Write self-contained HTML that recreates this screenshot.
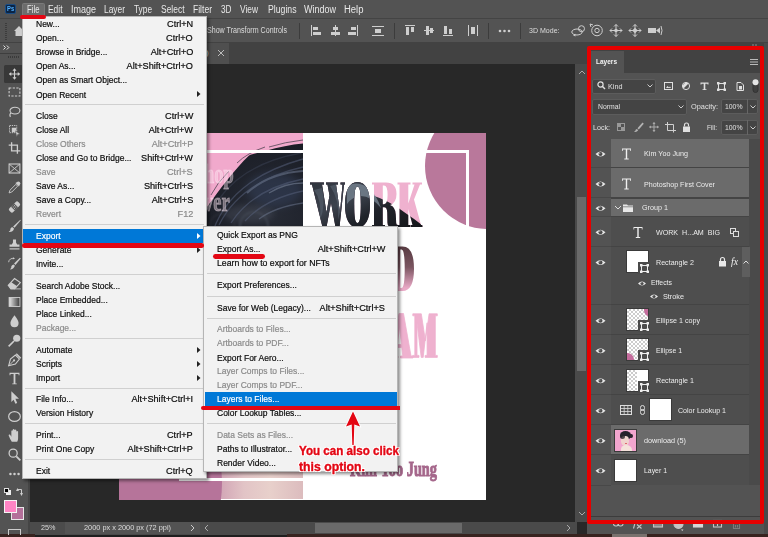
<!DOCTYPE html>
<html><head><meta charset="utf-8"><title>Photoshop export layers</title>
<style>
*{box-sizing:border-box;margin:0;padding:0}
html,body{width:768px;height:537px;overflow:hidden;background:#282828}
body{position:relative;font-family:"Liberation Sans",sans-serif;color:#ddd;font-size:9px}
.a{position:absolute}
.t{position:absolute;white-space:nowrap;transform-origin:0 50%;line-height:1}
.tr{position:absolute;white-space:nowrap;transform-origin:100% 50%;line-height:1;text-align:right}
.mi{color:#111}
.dis{color:#8c8c8c}
.sep{position:absolute;height:1px;background:#d0d0d0}
svg{position:absolute;overflow:visible}
</style></head><body>

<div class="a" style="left:0;top:0;width:768px;height:18px;background:#535353"></div>
<div class="a" style="left:0;top:17.500px;width:768px;height:24.500px;background:#535353;border-top:1.200px solid #444"></div>
<div class="a" style="left:0;top:42px;width:768px;height:22px;background:#424242"></div>
<div class="a" style="left:0;top:42.500px;width:229px;height:21.500px;background:#4f4f4f"></div>
<div class="a" style="left:30px;top:64px;width:545px;height:458px;background:#282828"></div>
<div class="a" style="left:0;top:43px;width:28px;height:494px;background:#535353"></div>
<div class="a" style="left:28px;top:64px;width:2px;height:470px;background:#454545"></div>
<div class="a" style="left:30px;top:522px;width:547px;height:12px;background:#4a4a4a"></div>
<div class="a" style="left:30px;top:522px;width:170px;height:12px;background:#535353"></div>
<div class="a" style="left:30px;top:522px;width:35px;height:12px;background:#4b4b4b"></div>
<div class="a" style="left:314.500px;top:522.500px;width:147.500px;height:10.500px;background:#6a6a6a"></div>
<div class="a" style="left:575px;top:64px;width:12px;height:458px;background:#4a4a4a"></div>
<div class="a" style="left:577px;top:197px;width:8.500px;height:174px;background:#6a6a6a"></div>
<div class="a" style="left:587px;top:43px;width:181px;height:494px;background:#424242"></div>
<div class="a" style="left:764px;top:43px;width:4px;height:494px;background:#4a4a4a"></div>
<div class="a" style="left:0;top:533.500px;width:768px;height:3.500px;background:#38231f"></div>
<div class="a" style="left:35px;top:533.500px;width:252px;height:3.500px;background:#1e1e1e;border-top:1px solid #4a4a4a"></div>
<div class="a" style="left:5px;top:4px;width:11px;height:10px;background:#0a2445;border-radius:2px;border:1px solid #1c4d84"></div>
<div class="t" style="left:6.500px;top:5.500px;font-size:6.500px;font-weight:bold;color:#4fb0ff;transform:scaleX(.9)">Ps</div>
<div class="a" style="left:22px;top:2.500px;width:22.500px;height:14px;background:#6c6c6c;border:1px solid #7a7a7a;border-radius:1.500px"></div>
<div class="t mb" style="left: 26.5px; top: 4.5px; font-size: 10px; color: rgb(232, 232, 232); transform: scaleX(0.7752);">File</div>
<div class="t mb" style="left: 47.5px; top: 4.5px; font-size: 10px; color: rgb(232, 232, 232); transform: scaleX(0.8413);">Edit</div>
<div class="t mb" style="left: 71px; top: 4.5px; font-size: 10px; color: rgb(232, 232, 232); transform: scaleX(0.8994);">Image</div>
<div class="t mb" style="left: 104px; top: 4.5px; font-size: 10px; color: rgb(232, 232, 232); transform: scaleX(0.8395);">Layer</div>
<div class="t mb" style="left: 134px; top: 4.5px; font-size: 10px; color: rgb(232, 232, 232); transform: scaleX(0.83);">Type</div>
<div class="t mb" style="left: 160.5px; top: 4.5px; font-size: 10px; color: rgb(232, 232, 232); transform: scaleX(0.8454);">Select</div>
<div class="t mb" style="left: 193px; top: 4.5px; font-size: 10px; color: rgb(232, 232, 232); transform: scaleX(0.8545);">Filter</div>
<div class="t mb" style="left: 220.5px; top: 4.5px; font-size: 10px; color: rgb(232, 232, 232); transform: scaleX(0.8205);">3D</div>
<div class="t mb" style="left: 240px; top: 4.5px; font-size: 10px; color: rgb(232, 232, 232); transform: scaleX(0.8372);">View</div>
<div class="t mb" style="left: 267.5px; top: 4.5px; font-size: 10px; color: rgb(232, 232, 232); transform: scaleX(0.8686);">Plugins</div>
<div class="t mb" style="left: 304px; top: 4.5px; font-size: 10px; color: rgb(232, 232, 232); transform: scaleX(0.8994);">Window</div>
<div class="t mb" style="left: 343.5px; top: 4.5px; font-size: 10px; color: rgb(232, 232, 232); transform: scaleX(0.9476);">Help</div>
<div class="t fit" style="left: 207px; top: 26px; font-size: 8.5px; color: rgb(220, 220, 220); transform: scaleX(0.8341);">Show Transform Controls</div>
<div class="a" style="left:299px;top:23px;width:1px;height:16px;background:#3c3c3c"></div>
<div class="a" style="left:394px;top:23px;width:1px;height:16px;background:#3c3c3c"></div>
<div class="a" style="left:488px;top:23px;width:1px;height:16px;background:#3c3c3c"></div>
<div class="a" style="left:520px;top:23px;width:1px;height:16px;background:#3c3c3c"></div>
<svg style="left:0;top:0" width="768" height="64">
<g fill="#cecece">
<rect x="311" y="25" width="1" height="11"></rect><rect x="313" y="27" width="5" height="3"></rect><rect x="313" y="32" width="8" height="3"></rect>
<rect x="335" y="25" width="1" height="11"></rect><rect x="333" y="27" width="5" height="3"></rect><rect x="331" y="32" width="9" height="3"></rect>
<rect x="357" y="25" width="1" height="11"></rect><rect x="351" y="27" width="5" height="3"></rect><rect x="348" y="32" width="8" height="3"></rect>
<rect x="372" y="26" width="12" height="1"></rect><rect x="372" y="35" width="12" height="1"></rect><rect x="375" y="29" width="6" height="4"></rect>
<rect x="405" y="25" width="10" height="1"></rect><rect x="406" y="27" width="3" height="8"></rect><rect x="411" y="27" width="3" height="5"></rect>
<rect x="424" y="30" width="10" height="1"></rect><rect x="426" y="26" width="3" height="9"></rect><rect x="430" y="28" width="3" height="5"></rect>
<rect x="443" y="35" width="10" height="1"></rect><rect x="444" y="26" width="3" height="8"></rect><rect x="449" y="29" width="3" height="5"></rect>
<rect x="468" y="25" width="1" height="11"></rect><rect x="477" y="25" width="1" height="11"></rect><rect x="471" y="27" width="4" height="7"></rect>
<circle cx="500" cy="31" r="1.3"></circle><circle cx="504.5" cy="31" r="1.3"></circle><circle cx="509" cy="31" r="1.3"></circle>
</g>
<g fill="none" stroke="#cecece" stroke-width="1">
<ellipse cx="577" cy="32" rx="5.200" ry="3"></ellipse><circle cx="581.500" cy="28.700" r="3"></circle><path d="M575.500 36.500l-2.500 -1.200l2.300 -1.600z" fill="#cecece" stroke="none"></path>
<circle cx="597" cy="30.5" r="5.3"></circle><circle cx="597" cy="30.5" r="2.2"></circle><path d="M591 27 l-1 -3 l3 1"></path>
<path d="M616 24.5 v12 M610 30.5 h12 M614 26.5 l2 -2 l2 2 M614 34.500 l2 2 l2 -2 M612 28.500 l-2 2 l2 2 M620 28.500 l2 2 l-2 2"></path>
<path d="M635 24.500 v12 M629 30.500 h12 M633 26.500 l2 -2 l2 2 M633 34.500 l2 2 l2 -2 M631 28.500 l-2 2 l2 2 M639 28.500 l2 2 l-2 2"></path>
</g>
<rect x="648" y="28" width="8" height="5" fill="#cecece"></rect><path d="M656 30.500 l4 -3 v6 z" fill="#cecece"></path><path d="M661 26 q2 4.500 0 9" fill="none" stroke="#cecece" stroke-width="1"></path>
<circle cx="616" cy="30.500" r="1.8" fill="#cecece"></circle>
<rect x="633" y="28.500" width="4" height="4" fill="#cecece" transform="rotate(45 635 30.500)"></rect>
</svg>
<div class="t fit" style="left: 528.5px; top: 26.5px; font-size: 8px; color: rgb(220, 220, 220); transform: scaleX(0.8793);">3D Mode:</div>
<svg style="left:13.500px;top:25.500px" width="10" height="10"><path d="M0 5 L5 0 L10 5 H8.500 V10 H1.500 V5Z" fill="#cecece"></path></svg>
<div class="a" style="left:5px;top:23px;width:2px;height:17px;background:repeating-linear-gradient(180deg,#3c3c3c 0 1px,transparent 1px 2px)"></div>
<div class="t" style="left:206px;top:49px;font-size:8px;color:#ddd">) </div>
<svg style="left:218px;top:50px" width="6" height="6"><path d="M0 0L6 6M6 0L0 6" stroke="#bbb" stroke-width="1"></path></svg>
<svg style="left:3px;top:44.500px" width="7" height="5"><path d="M.5 .5L2.500 2.500L.5 4.500M3.800 .5L5.800 2.500L3.800 4.500" fill="none" stroke="#e4e4e4" stroke-width="1"></path></svg>
<div class="a" style="left:0;top:53px;width:28px;height:1px;background:#3e3e3e"></div>
<div class="a" style="left:8px;top:56px;width:12px;height:2px;background:repeating-linear-gradient(90deg,#3a3a3a 0 1px,transparent 1px 2px)"></div>
<div class="a" style="left:3.500px;top:65px;width:19px;height:17.500px;background:#383838;border-radius:1.500px"></div>
<svg style="left:0;top:0" width="30" height="537"><g transform="translate(14.500 74) scale(0.81)"><path d="M0 -6V6M-6 0H6" stroke="#cecece" stroke-width="1.4" fill="none"></path><path d="M-2.500 -4L0 -7L2.500 -4ZM-2.500 4L0 7L2.500 4ZM-4 -2.500L-7 0L-4 2.500ZM4 -2.500L7 0L4 2.500Z" fill="#cecece"></path></g><g transform="translate(14.500 92) scale(0.9)"><rect x="-6" y="-4.500" width="12" height="9" fill="none" stroke="#cecece" stroke-width="1.200" stroke-dasharray="2.500 1.500"></rect></g><g transform="translate(14.500 111.5) scale(0.9)"><ellipse cx="0.500" cy="-1" rx="5.500" ry="3.800" fill="none" stroke="#cecece" stroke-width="1.200"></ellipse><path d="M-4 1.500 q-2 2 -0.500 4.500" fill="none" stroke="#cecece" stroke-width="1.200"></path></g><g transform="translate(14.500 130) scale(0.9)"><rect x="-5.500" y="-5" width="8" height="8" fill="none" stroke="#cecece" stroke-width="1" stroke-dasharray="1.500 1"></rect><rect x="-3" y="-2.500" width="5" height="5" fill="#cecece"></rect><path d="M1 1L6 4.500L3.500 5L2.500 7.500Z" fill="#cecece" stroke="#535353" stroke-width=".5"></path></g><g transform="translate(14.500 148) scale(0.828)"><path d="M-3.500 -7V3.500H7M-7 -3.500H3.500V7" fill="none" stroke="#cecece" stroke-width="1.600"></path></g><g transform="translate(14.500 168.5) scale(0.9)"><rect x="-6" y="-5" width="12" height="10" fill="none" stroke="#cecece" stroke-width="1.200"></rect><path d="M-6 -5L6 5M6 -5L-6 5" stroke="#cecece" stroke-width="1"></path></g><g transform="translate(14.500 187.5) scale(0.9)"><path d="M-6 6L-5 3L1.500 -3.500L3.500 -1.500L-3 5Z" fill="none" stroke="#cecece" stroke-width="1"></path><path d="M1 -5L5 -1L6.500 -4.500Q6 -7 3.500 -6.500Z" fill="#cecece"></path></g><g transform="translate(14.500 207) scale(0.9)"><g transform="rotate(-45)"><rect x="-7" y="-3" width="14" height="6" rx="2" fill="#cecece"></rect><rect x="-2.500" y="-3" width="5" height="6" fill="#535353"></rect><circle cx="-1" cy="-1" r=".6" fill="#cecece"></circle><circle cx="1" cy="-1" r=".6" fill="#cecece"></circle><circle cx="-1" cy="1" r=".6" fill="#cecece"></circle><circle cx="1" cy="1" r=".6" fill="#cecece"></circle></g></g><g transform="translate(14.500 226) scale(0.9)"><path d="M6.500 -7L7 -6.500L0 2L-1.500 0.500Z" fill="#cecece"></path><path d="M-2 1.500L-0.500 3Q-2 7 -6.500 6.500Q-4 5 -4.500 3Q-4 1.500 -2 1.500Z" fill="#cecece"></path></g><g transform="translate(14.500 244.5) scale(0.765)"><path d="M-2 -6.500h4v4l1.500 2.500h3v3h-13v-3h3l1.500 -2.500z" fill="#cecece"></path><rect x="-6.500" y="5" width="13" height="1.500" fill="#cecece"></rect></g><g transform="translate(14.500 264) scale(0.9)"><path d="M6 -7L7 -6L1 1L-0.500 -0.500Z" fill="#cecece"></path><path d="M-1 0.500L0.500 2Q-1 6 -5 6Q-3 4 -3.500 2.500Q-3 1 -1 0.500Z" fill="#cecece"></path><path d="M-6.500 -2a4.500 4.500 0 0 1 6 -4" fill="none" stroke="#cecece" stroke-width="1"></path><path d="M-1.500 -7.500l2 1.500l-2.500 1z" fill="#cecece"></path></g><g transform="translate(14.500 283.5) scale(0.9)"><path d="M-7 2L0 -5.500L6.500 -1L0 6H-4Z" fill="none" stroke="#cecece" stroke-width="1.200"></path><path d="M-3.500 -1.500L3 3L0 6H-4L-7 2Z" fill="#cecece"></path><path d="M0 6H7" stroke="#cecece" stroke-width="1"></path></g><g transform="translate(14.500 302) scale(0.9)"><defs><linearGradient id="gr"><stop offset="0" stop-color="#e8e8e8"></stop><stop offset="1" stop-color="#3a3a3a"></stop></linearGradient></defs><rect x="-6" y="-5" width="12" height="10" fill="url(#gr)" stroke="#cecece" stroke-width="1"></rect></g><g transform="translate(14.500 321) scale(0.9)"><path d="M0 -6.500Q5 0 4.500 2.500A4.500 4.500 0 0 1 -4.500 2.500Q-5 0 0 -6.500Z" fill="#cecece"></path></g><g transform="translate(14.500 340.5) scale(0.9)"><circle cx="2.500" cy="-2.500" r="4" fill="#cecece"></circle><path d="M-0.500 0.500L-6.500 6.500" stroke="#cecece" stroke-width="1.800"></path></g><g transform="translate(14.500 360) scale(0.9)"><path d="M-6.500 6.500L-4.500 -1L1 -5.500L5.500 -1L1 4.500Z" fill="none" stroke="#cecece" stroke-width="1.200"></path><path d="M-6.500 6.500L-1 1" stroke="#cecece" stroke-width="1"></path><circle cx="-0.500" cy="0.500" r="1.200" fill="#cecece"></circle><path d="M2 -7L7 -2" stroke="#cecece" stroke-width="1.500"></path></g><g transform="translate(14.500 378.5) scale(0.9)"><path d="M-5.500 -6.500H5.500V-3.500H4.500V-5H1V5.500H2.500V6.500H-2.500V5.500H-1V-5H-4.500V-3.500H-5.500Z" fill="#cecece"></path></g><g transform="translate(14.500 397.5) scale(0.9)"><path d="M-3.500 -7L5 1.500H1L3 6L1 7L-1 2.500L-3.500 5Z" fill="#cecece"></path></g><g transform="translate(14.500 416.5) scale(0.9)"><ellipse cx="0" cy="0" rx="6.500" ry="5.500" fill="none" stroke="#cecece" stroke-width="1.300"></ellipse></g><g transform="translate(14.500 435.5) scale(0.9)"><path d="M-3 7Q-5 4 -6.500 0Q-6.500 -1.500 -5 -1L-3.500 1.500V-5Q-2.500 -6.500 -2 -5V-1V-6.500Q-0.800 -7.800 0 -6.500V-1V-6Q1.200 -7.200 2 -6V-0.500V-4.500Q3.200 -5.500 4 -4.500V3Q4 5.500 3 7Z" fill="#cecece"></path></g><g transform="translate(14.500 454.5) scale(0.9)"><circle cx="-1.500" cy="-1.500" r="4.500" fill="none" stroke="#cecece" stroke-width="1.400"></circle><path d="M2 2L6.500 6.500" stroke="#cecece" stroke-width="2"></path></g><g transform="translate(14.500 474) scale(0.9)"><circle cx="-4.500" cy="0" r="1.400" fill="#cecece"></circle><circle cx="0" cy="0" r="1.400" fill="#cecece"></circle><circle cx="4.500" cy="0" r="1.400" fill="#cecece"></circle></g></svg>
<div class="a" style="left:6px;top:490px;width:5px;height:5px;background:#eee"></div>
<div class="a" style="left:4px;top:488px;width:5px;height:5px;background:#000;border:1px solid #ddd"></div>
<svg style="left:16px;top:488px" width="8" height="8"><path d="M1.500 3V1.500H5.500V6" fill="none" stroke="#cecece" stroke-width="1"></path><path d="M0 3L1.500 0L3 3ZM4 5L5.500 8L7 5Z" fill="#cecece"></path></svg>
<div class="a" style="left:11px;top:507px;width:13px;height:13px;background:#b4709a;border:1px solid #e8e8e8"></div>
<div class="a" style="left:4px;top:500px;width:13px;height:13px;background:#ff84c4;border:1px solid #f4f4f4"></div>
<div class="a" style="left:8px;top:529px;width:13px;height:6px;border:1px solid #ccc;border-bottom:none"></div>
<div class="t fit" style="left: 40.5px; top: 523.5px; font-size: 8px; color: rgb(220, 220, 220); transform: scaleX(0.9054);">25%</div>
<div class="t fit" style="left: 84px; top: 523.5px; font-size: 8px; color: rgb(220, 220, 220); transform: scaleX(0.9184);">2000 px x 2000 px (72 ppi)</div>
<svg style="left:190px;top:524px" width="5" height="8"><path d="M1 1L4 4L1 7" fill="none" stroke="#ccc" stroke-width="1"></path></svg>
<svg style="left:204px;top:524px" width="5" height="8"><path d="M4 1L1 4L4 7" fill="none" stroke="#aaa" stroke-width="1"></path></svg>
<svg style="left:566px;top:524px" width="5" height="8"><path d="M1 1L4 4L1 7" fill="none" stroke="#aaa" stroke-width="1"></path></svg>
<svg style="left:578px;top:70px" width="8" height="5"><path d="M1 4L4 1L7 4" fill="none" stroke="#aaa" stroke-width="1"></path></svg>
<svg style="left:578px;top:511px" width="8" height="5"><path d="M1 1L4 4L7 1" fill="none" stroke="#aaa" stroke-width="1"></path></svg>
<div class="a" id="art" style="left:119px;top:133px;width:367px;height:367px;background:#fff;overflow:hidden">
<div class="a" style="left:0;top:0;width:184px;height:366px;background:#f1a9cc;overflow:hidden"><svg style="left:0;top:0" width="184" height="250"><defs><radialGradient id="hr" cx="150" cy="80" r="110" gradientUnits="userSpaceOnUse"><stop offset="0" stop-color="#272b35"></stop><stop offset=".55" stop-color="#1d2029"></stop><stop offset="1" stop-color="#13151a"></stop></radialGradient></defs><path d="M184,10.500 C172,11.500 160,14 146,18 C138,20 134,21 130,22.500 C116,36 101,56 88,74 C84,85 82,100 80,130 V250 H184 Z" fill="url(#hr)"></path></svg><div class="a" style="left:128px;top:40px;width:56px;height:34px;border-radius:50%;background:#34405a;opacity:.55;filter:blur(4px)"></div><div class="a" style="left:105px;top:72px;width:50px;height:18px;border-radius:50%;background:#4a4f5c;opacity:.45;filter:blur(3px)"></div><div class="a" style="left:120px;top:78px;width:30px;height:30px;border-radius:50%;border:2px solid #454b57;opacity:.7;filter:blur(.8px)"></div><div class="a" style="left:90px;top:80px;width:26px;height:26px;border-radius:50%;border:1.500px solid #40444e;opacity:.6;filter:blur(.8px)"></div><svg style="left:0;top:0;filter:blur(.5px)" width="184" height="110"><g fill="none" stroke="#56607a" stroke-width="1.300" opacity=".55"><path d="M94,98 Q112,46 184,26"></path><path d="M100,92 Q122,48 184,34"></path><path d="M112,90 Q134,56 184,46"></path><path d="M126,88 Q146,66 184,58"></path><path d="M100,66 Q126,30 182,20" stroke="#3a4152"></path><path d="M140,86 Q156,74 184,70" stroke="#6a758c"></path><path d="M150,60 Q166,50 184,50" stroke="#7c879c"></path><path d="M128,60 Q150,40 184,38" stroke="#6f7b92" stroke-width="2"></path></g><g fill="none" stroke="#2a2d36" stroke-width=".8" opacity=".8"><path d="M150,14 Q166,9 184,7"></path><path d="M118,30 Q128,20 146,14"></path><path d="M92,62 Q98,50 110,38"></path></g></svg></div>
<div class="t" style="left:85px;top:27px;font-family:'Liberation Serif',serif;font-weight:bold;font-size:28px;color:rgba(255,235,245,.4);-webkit-text-stroke:1px rgba(255,235,245,.4);transform:scaleX(.66)">hop</div>
<div class="t" style="left:85px;top:55px;font-family:'Liberation Serif',serif;font-weight:bold;font-size:28px;color:rgba(255,235,245,.4);-webkit-text-stroke:1px rgba(255,235,245,.4);transform:scaleX(.66)">ver</div>
<div class="a" style="left:0;top:326px;width:184px;height:40px;background:linear-gradient(90deg,#d3a8b7 0,#d3a8b7 56%,#e2c4c6 68%,#e8d0cb 82%,#dcbcbe 100%)"></div>
<div class="a" style="left:-60px;top:250px;width:163px;height:200px;border-radius:50%;background:#b6749a"></div>
<div class="a" style="left:306px;top:-30px;width:126px;height:126px;border-radius:50%;background:#b9789b"></div>
<div class="a" style="left:60px;top:16.800px;width:290px;height:331.500px;border:3.500px solid #fff"></div>
<svg style="left:0;top:0" width="367" height="367" viewBox="119 133 367 367"><defs><clipPath id="cw" clip-rule="evenodd"><path transform="translate(310 182.4)" d="M0,0 H14 V2 H12 L16.5,30 L19.5,13 L17.5,2 H16 V0 H28 V2 H26 L30,30 L32.5,2 H30.5 V0 H35 V2 H34 L29.5,44.5 H25.5 L21,20 L16.5,44.5 H12.5 L2,2 H0 Z"></path><path transform="translate(345 182.4)" d="M12.5,-0.5 C20.5,-0.5 25,8 25,22.25 C25,36.5 20.5,45 12.5,45 C4.5,45 0,36.5 0,22.25 C0,8 4.5,-0.5 12.5,-0.5 Z M12.5,4 C10,4 9.2,10 9.2,22.25 C9.2,34.5 10,40.5 12.5,40.5 C15,40.5 15.8,34.5 15.8,22.25 C15.8,10 15,4 12.5,4 Z" clip-rule="evenodd"></path><path transform="translate(372 182.4)" d="M0,0 H14 Q24.5,0 24.5,11.5 Q24.5,20.5 18,22.5 Q23.500,24.5 23.8,32 L24.2,40.500 Q24.3,42.500 26,42.500 V44.5 H19.500 Q15.5,44.5 15.400,40 L15.2,30 Q15.1,24.800 12,24.800 H10.800 V42.500 H13 V44.5 H0 V42.500 H2 V2 H0 Z M10.800,3 V21.800 H12 Q15.600,21.800 15.600,12.400 Q15.600,3 12,3 Z" clip-rule="evenodd"></path><path transform="translate(397.5 182.4)" d="M0,0 H13 V2 H10.800 V21 L17,2 H15 V0 H24.5 V2 H22.5 L16.5,17 L23.500,42.500 H25 V44.5 H13.500 V42.500 H15 L10.800,26.500 V42.500 H13 V44.5 H0 V42.500 H2 V2 H0 Z"></path><path transform="translate(389.500 246.600)" d="M0,0 H13 Q24.5,0 24.5,22.250 Q24.5,44.500 13,44.500 H0 V42.500 H2 V2 H0 Z M10.800,3 V41.500 H12 Q15.200,41.500 15.200,22.250 Q15.200,3 12,3 Z" clip-rule="evenodd"></path></clipPath><linearGradient id="hg" x1="0" y1="0" x2="1" y2="1"><stop offset="0" stop-color="#2b2f38"></stop><stop offset=".4" stop-color="#3c424d"></stop><stop offset=".6" stop-color="#20232a"></stop><stop offset="1" stop-color="#121316"></stop></linearGradient><linearGradient id="dg" x1="0" y1="0" x2="0" y2="1"><stop offset="0" stop-color="#4c3238"></stop><stop offset=".45" stop-color="#7a5560"></stop><stop offset=".8" stop-color="#e9a9c6"></stop></linearGradient></defs><g clip-path="url(#cw)"><rect x="300" y="175" width="135" height="60" fill="#efb1cf"></rect><rect x="300" y="175" width="71.500" height="60" fill="#23262e"></rect><path d="M300,175 H371.500 V195 Q390,201 404,212 Q416,220 427,229 V235 H300 Z" fill="url(#hg)"></path><path d="M347,186 q10,-6 22,2 q8,8 12,20 q-10,-12 -20,-12 q-8,0 -14,8 z" fill="#7b8896" opacity=".75"></path><path d="M314,190 q8,10 6,30 q6,-14 2,-32 z M330,186 q10,14 8,34 q6,-18 0,-36 z" fill="#596270" opacity=".6"></path><rect x="385" y="240" width="40" height="60" fill="url(#dg)"></rect></g><path transform="translate(390 313.500)" d="M9,0 H13.500 L21,42.500 H23 V44.500 H10.500 V42.500 H12.800 L11.800,34 H7 L6.200,42.500 H8 V44.500 H0 V42.500 H2 Z M7.400,31 H11.500 L9.500,13 Z" fill="#efb1cf" fill-rule="evenodd" stroke="#efb1cf" stroke-width=".8"></path><path transform="translate(412.800 313.800)" d="M0,0 H8.500 L12.600,27 L16.300,0 H24.500 V2 H22.500 V41.600 H24.500 V43.600 H12.300 V41.600 H14.300 V9 L10.400,43.600 H8.400 L4.200,9 V41.600 H6.200 V43.600 H0 V41.600 H2 V2 H0 Z" fill="#efb1cf" stroke="#efb1cf" stroke-width=".8"></path></svg>
<div class="t bigt" style="left: 231px; top: 325.5px; font-family: &quot;Liberation Serif&quot;, serif; font-weight: bold; font-size: 21.5px; color: rgb(165, 103, 139); -webkit-text-stroke: 1px rgb(165, 103, 139); transform: scaleX(0.666);">Kim Yoo Jung</div>
</div>
<div class="a" style="left:22px;top:16px;width:184.5px;height:463px;background:#f2f2f2;border:1px solid #b5b5b5;box-shadow:2px 2px 3px rgba(0,0,0,.45)"></div>
<div class="t" style="left:36px;top:19.1px;font-size:9.5px;color:#0a0a0a;-webkit-text-stroke:.2px #0a0a0a;transform:scaleX(.895);">New...</div>
<div class="tr" style="right:575px;top:19.1px;font-size:9.5px;color:#0a0a0a;-webkit-text-stroke:.2px #0a0a0a;transform:scaleX(.962)">Ctrl+N</div>
<div class="t" style="left:36px;top:33.1px;font-size:9.5px;color:#0a0a0a;-webkit-text-stroke:.2px #0a0a0a;transform:scaleX(.895);">Open...</div>
<div class="tr" style="right:575px;top:33.1px;font-size:9.5px;color:#0a0a0a;-webkit-text-stroke:.2px #0a0a0a;transform:scaleX(.962)">Ctrl+O</div>
<div class="t" style="left:36px;top:47.1px;font-size:9.5px;color:#0a0a0a;-webkit-text-stroke:.2px #0a0a0a;transform:scaleX(.895);">Browse in Bridge...</div>
<div class="tr" style="right:575px;top:47.1px;font-size:9.5px;color:#0a0a0a;-webkit-text-stroke:.2px #0a0a0a;transform:scaleX(.962)">Alt+Ctrl+O</div>
<div class="t" style="left:36px;top:61.1px;font-size:9.5px;color:#0a0a0a;-webkit-text-stroke:.2px #0a0a0a;transform:scaleX(.895);">Open As...</div>
<div class="tr" style="right:575px;top:61.1px;font-size:9.5px;color:#0a0a0a;-webkit-text-stroke:.2px #0a0a0a;transform:scaleX(.962)">Alt+Shift+Ctrl+O</div>
<div class="t" style="left:36px;top:75.1px;font-size:9.5px;color:#0a0a0a;-webkit-text-stroke:.2px #0a0a0a;transform:scaleX(.895);">Open as Smart Object...</div>
<div class="t" style="left:36px;top:89.6px;font-size:9.5px;color:#0a0a0a;-webkit-text-stroke:.2px #0a0a0a;transform:scaleX(.895);">Open Recent</div>
<svg style="left:197px;top:91px" width="4" height="6"><path d="M0 0L3.500 3L0 6Z" fill="#222"></path></svg>
<div class="sep" style="left:25px;top:104px;width:179px"></div>
<div class="t" style="left:36px;top:111.1px;font-size:9.5px;color:#0a0a0a;-webkit-text-stroke:.2px #0a0a0a;transform:scaleX(.895);">Close</div>
<div class="tr" style="right:575px;top:111.1px;font-size:9.5px;color:#0a0a0a;-webkit-text-stroke:.2px #0a0a0a;transform:scaleX(.962)">Ctrl+W</div>
<div class="t" style="left:36px;top:125.1px;font-size:9.5px;color:#0a0a0a;-webkit-text-stroke:.2px #0a0a0a;transform:scaleX(.895);">Close All</div>
<div class="tr" style="right:575px;top:125.1px;font-size:9.5px;color:#0a0a0a;-webkit-text-stroke:.2px #0a0a0a;transform:scaleX(.962)">Alt+Ctrl+W</div>
<div class="t" style="left:36px;top:139.1px;font-size:9.5px;color:#8a8a8a;-webkit-text-stroke:.2px #8a8a8a;transform:scaleX(.895);">Close Others</div>
<div class="tr" style="right:575px;top:139.1px;font-size:9.5px;color:#8a8a8a;-webkit-text-stroke:.2px #8a8a8a;transform:scaleX(.962)">Alt+Ctrl+P</div>
<div class="t" style="left:36px;top:153.1px;font-size:9.5px;color:#0a0a0a;-webkit-text-stroke:.2px #0a0a0a;transform:scaleX(.895);">Close and Go to Bridge...</div>
<div class="tr" style="right:575px;top:153.1px;font-size:9.5px;color:#0a0a0a;-webkit-text-stroke:.2px #0a0a0a;transform:scaleX(.962)">Shift+Ctrl+W</div>
<div class="t" style="left:36px;top:167.1px;font-size:9.5px;color:#8a8a8a;-webkit-text-stroke:.2px #8a8a8a;transform:scaleX(.895);">Save</div>
<div class="tr" style="right:575px;top:167.1px;font-size:9.5px;color:#8a8a8a;-webkit-text-stroke:.2px #8a8a8a;transform:scaleX(.962)">Ctrl+S</div>
<div class="t" style="left:36px;top:181.1px;font-size:9.5px;color:#0a0a0a;-webkit-text-stroke:.2px #0a0a0a;transform:scaleX(.895);">Save As...</div>
<div class="tr" style="right:575px;top:181.1px;font-size:9.5px;color:#0a0a0a;-webkit-text-stroke:.2px #0a0a0a;transform:scaleX(.962)">Shift+Ctrl+S</div>
<div class="t" style="left:36px;top:195.1px;font-size:9.5px;color:#0a0a0a;-webkit-text-stroke:.2px #0a0a0a;transform:scaleX(.895);">Save a Copy...</div>
<div class="tr" style="right:575px;top:195.1px;font-size:9.5px;color:#0a0a0a;-webkit-text-stroke:.2px #0a0a0a;transform:scaleX(.962)">Alt+Ctrl+S</div>
<div class="t" style="left:36px;top:209.1px;font-size:9.5px;color:#8a8a8a;-webkit-text-stroke:.2px #8a8a8a;transform:scaleX(.895);">Revert</div>
<div class="tr" style="right:575px;top:209.1px;font-size:9.5px;color:#8a8a8a;-webkit-text-stroke:.2px #8a8a8a;transform:scaleX(.962)">F12</div>
<div class="sep" style="left:25px;top:224px;width:179px"></div>
<div class="a" style="left:23px;top:228.5px;width:182px;height:14.300px;background:#0078d7"></div>
<div class="t" style="left:36px;top:231.1px;font-size:9.5px;color:#fff;-webkit-text-stroke:.2px #fff;transform:scaleX(.895);">Export</div>
<svg style="left:197px;top:232.5px" width="4" height="6"><path d="M0 0L3.500 3L0 6Z" fill="#fff"></path></svg>
<div class="t" style="left:36px;top:245.1px;font-size:9.5px;color:#0a0a0a;-webkit-text-stroke:.2px #0a0a0a;transform:scaleX(.895);">Generate</div>
<svg style="left:197px;top:246.5px" width="4" height="6"><path d="M0 0L3.500 3L0 6Z" fill="#222"></path></svg>
<div class="t" style="left:36px;top:259.1px;font-size:9.5px;color:#0a0a0a;-webkit-text-stroke:.2px #0a0a0a;transform:scaleX(.895);">Invite...</div>
<div class="sep" style="left:25px;top:273.5px;width:179px"></div>
<div class="t" style="left:36px;top:281.1px;font-size:9.5px;color:#0a0a0a;-webkit-text-stroke:.2px #0a0a0a;transform:scaleX(.895);">Search Adobe Stock...</div>
<div class="t" style="left:36px;top:295.1px;font-size:9.5px;color:#0a0a0a;-webkit-text-stroke:.2px #0a0a0a;transform:scaleX(.895);">Place Embedded...</div>
<div class="t" style="left:36px;top:309.1px;font-size:9.5px;color:#0a0a0a;-webkit-text-stroke:.2px #0a0a0a;transform:scaleX(.895);">Place Linked...</div>
<div class="t" style="left:36px;top:323.1px;font-size:9.5px;color:#8a8a8a;-webkit-text-stroke:.2px #8a8a8a;transform:scaleX(.895);">Package...</div>
<div class="sep" style="left:25px;top:338px;width:179px"></div>
<div class="t" style="left:36px;top:345.1px;font-size:9.5px;color:#0a0a0a;-webkit-text-stroke:.2px #0a0a0a;transform:scaleX(.895);">Automate</div>
<svg style="left:197px;top:346.5px" width="4" height="6"><path d="M0 0L3.500 3L0 6Z" fill="#222"></path></svg>
<div class="t" style="left:36px;top:359.1px;font-size:9.5px;color:#0a0a0a;-webkit-text-stroke:.2px #0a0a0a;transform:scaleX(.895);">Scripts</div>
<svg style="left:197px;top:360.5px" width="4" height="6"><path d="M0 0L3.500 3L0 6Z" fill="#222"></path></svg>
<div class="t" style="left:36px;top:373.1px;font-size:9.5px;color:#0a0a0a;-webkit-text-stroke:.2px #0a0a0a;transform:scaleX(.895);">Import</div>
<svg style="left:197px;top:374.5px" width="4" height="6"><path d="M0 0L3.500 3L0 6Z" fill="#222"></path></svg>
<div class="sep" style="left:25px;top:387.5px;width:179px"></div>
<div class="t" style="left:36px;top:394.1px;font-size:9.5px;color:#0a0a0a;-webkit-text-stroke:.2px #0a0a0a;transform:scaleX(.895);">File Info...</div>
<div class="tr" style="right:575px;top:394.1px;font-size:9.5px;color:#0a0a0a;-webkit-text-stroke:.2px #0a0a0a;transform:scaleX(.962)">Alt+Shift+Ctrl+I</div>
<div class="t" style="left:36px;top:408.1px;font-size:9.5px;color:#0a0a0a;-webkit-text-stroke:.2px #0a0a0a;transform:scaleX(.895);">Version History</div>
<div class="sep" style="left:25px;top:422.5px;width:179px"></div>
<div class="t" style="left:36px;top:430.1px;font-size:9.5px;color:#0a0a0a;-webkit-text-stroke:.2px #0a0a0a;transform:scaleX(.895);">Print...</div>
<div class="tr" style="right:575px;top:430.1px;font-size:9.5px;color:#0a0a0a;-webkit-text-stroke:.2px #0a0a0a;transform:scaleX(.962)">Ctrl+P</div>
<div class="t" style="left:36px;top:444.1px;font-size:9.5px;color:#0a0a0a;-webkit-text-stroke:.2px #0a0a0a;transform:scaleX(.895);">Print One Copy</div>
<div class="tr" style="right:575px;top:444.1px;font-size:9.5px;color:#0a0a0a;-webkit-text-stroke:.2px #0a0a0a;transform:scaleX(.962)">Alt+Shift+Ctrl+P</div>
<div class="sep" style="left:25px;top:458.5px;width:179px"></div>
<div class="t" style="left:36px;top:466.1px;font-size:9.5px;color:#0a0a0a;-webkit-text-stroke:.2px #0a0a0a;transform:scaleX(.895);">Exit</div>
<div class="tr" style="right:575px;top:466.1px;font-size:9.5px;color:#0a0a0a;-webkit-text-stroke:.2px #0a0a0a;transform:scaleX(.962)">Ctrl+Q</div>
<div class="a" style="left:203px;top:226px;width:195px;height:245.5px;background:#f2f2f2;border:1px solid #b5b5b5;box-shadow:2px 2px 3px rgba(0,0,0,.45)"></div>
<div class="t" style="left:217px;top:230.1px;font-size:9.5px;color:#0a0a0a;-webkit-text-stroke:.2px #0a0a0a;transform:scaleX(.895);">Quick Export as PNG</div>
<div class="t" style="left:217px;top:244.0px;font-size:9.5px;color:#0a0a0a;-webkit-text-stroke:.2px #0a0a0a;transform:scaleX(.895);">Export As...</div>
<div class="tr" style="right:383px;top:244.0px;font-size:9.5px;color:#0a0a0a;-webkit-text-stroke:.2px #0a0a0a;transform:scaleX(.962)">Alt+Shift+Ctrl+W</div>
<div class="t" style="left: 217px; top: 258px; font-size: 9.5px; color: rgb(10, 10, 10); -webkit-text-stroke: 0.2px rgb(10, 10, 10); transform: scaleX(0.9184);">Learn how to export for NFTs</div>
<div class="sep" style="left:207px;top:273px;width:189px"></div>
<div class="t" style="left:217px;top:280.0px;font-size:9.5px;color:#0a0a0a;-webkit-text-stroke:.2px #0a0a0a;transform:scaleX(.895);">Export Preferences...</div>
<div class="sep" style="left:207px;top:295.5px;width:189px"></div>
<div class="t" style="left:217px;top:302.8px;font-size:9.5px;color:#0a0a0a;-webkit-text-stroke:.2px #0a0a0a;transform:scaleX(.895);">Save for Web (Legacy)...</div>
<div class="tr" style="right:383px;top:302.8px;font-size:9.5px;color:#0a0a0a;-webkit-text-stroke:.2px #0a0a0a;transform:scaleX(.962)">Alt+Shift+Ctrl+S</div>
<div class="sep" style="left:207px;top:317.5px;width:189px"></div>
<div class="t" style="left:217px;top:324.0px;font-size:9.5px;color:#8a8a8a;-webkit-text-stroke:.2px #8a8a8a;transform:scaleX(.895);">Artboards to Files...</div>
<div class="t" style="left:217px;top:338.0px;font-size:9.5px;color:#8a8a8a;-webkit-text-stroke:.2px #8a8a8a;transform:scaleX(.895);">Artboards to PDF...</div>
<div class="t" style="left:217px;top:352.70000000000005px;font-size:9.5px;color:#0a0a0a;-webkit-text-stroke:.2px #0a0a0a;transform:scaleX(.895);">Export For Aero...</div>
<div class="t" style="left:217px;top:366.3px;font-size:9.5px;color:#8a8a8a;-webkit-text-stroke:.2px #8a8a8a;transform:scaleX(.895);">Layer Comps to Files...</div>
<div class="t" style="left:217px;top:380.3px;font-size:9.5px;color:#8a8a8a;-webkit-text-stroke:.2px #8a8a8a;transform:scaleX(.895);">Layer Comps to PDF...</div>
<div class="a" style="left:204.5px;top:391.6px;width:192.5px;height:14.300px;background:#0078d7"></div>
<div class="t" style="left:217px;top:394.20000000000005px;font-size:9.5px;color:#fff;-webkit-text-stroke:.2px #fff;transform:scaleX(.895);">Layers to Files...</div>
<div class="t" style="left:217px;top:408.20000000000005px;font-size:9.5px;color:#0a0a0a;-webkit-text-stroke:.2px #0a0a0a;transform:scaleX(.895);">Color Lookup Tables...</div>
<div class="sep" style="left:207px;top:422.5px;width:189px"></div>
<div class="t" style="left:217px;top:430.20000000000005px;font-size:9.5px;color:#8a8a8a;-webkit-text-stroke:.2px #8a8a8a;transform:scaleX(.895);">Data Sets as Files...</div>
<div class="t" style="left:217px;top:444.20000000000005px;font-size:9.5px;color:#0a0a0a;-webkit-text-stroke:.2px #0a0a0a;transform:scaleX(.895);">Paths to Illustrator...</div>
<div class="t" style="left:217px;top:458.20000000000005px;font-size:9.5px;color:#0a0a0a;-webkit-text-stroke:.2px #0a0a0a;transform:scaleX(.895);">Render Video...</div>
<div class="a" style="left:20px;top:15px;width:25.500px;height:3.500px;background:#e30613;border-radius:2px"></div>
<div class="a" style="left:22px;top:243px;width:182px;height:5px;background:#e30613;border-radius:2.500px"></div>
<div class="a" style="left:213px;top:254px;width:52px;height:4.800px;background:#e30613;border-radius:2.400px"></div>
<div class="a" style="left:201px;top:405.600px;width:199px;height:4.200px;background:#e30613;border-radius:2px 0 0 2px"></div>
<svg style="left:340px;top:408px" width="26" height="42"><path d="M13 3.500L20 18.500L14.300 16.500L13.700 37H12.300L11.700 16.500L6 18.500Z" fill="#e30613" stroke="#fff" stroke-width="1.500" paint-order="stroke"></path></svg>
<div class="t fit" style="left: 299px; top: 445px; font-size: 12.5px; font-weight: bold; color: rgb(227, 6, 19); -webkit-text-stroke: 0.35px rgb(227, 6, 19); text-shadow: rgb(255, 255, 255) -1px -1px 0px, rgb(255, 255, 255) 1px -1px 0px, rgb(255, 255, 255) -1px 1px 0px, rgb(255, 255, 255) 1px 1px 0px, rgb(255, 255, 255) 0px -1px 0px, rgb(255, 255, 255) 0px 1px 0px, rgb(255, 255, 255) -1px 0px 0px, rgb(255, 255, 255) 1px 0px 0px; transform: scaleX(0.9306);">You can also click</div>
<div class="t fit" style="left: 299px; top: 460.5px; font-size: 12.5px; font-weight: bold; color: rgb(227, 6, 19); -webkit-text-stroke: 0.35px rgb(227, 6, 19); text-shadow: rgb(255, 255, 255) -1px -1px 0px, rgb(255, 255, 255) 1px -1px 0px, rgb(255, 255, 255) -1px 1px 0px, rgb(255, 255, 255) 1px 1px 0px, rgb(255, 255, 255) 0px -1px 0px, rgb(255, 255, 255) 0px 1px 0px, rgb(255, 255, 255) -1px 0px 0px, rgb(255, 255, 255) 1px 0px 0px; transform: scaleX(0.9798);">this option.</div>
<svg style="left:752px;top:44px" width="6" height="4"><path d="M1 0V3M4 0V3" stroke="#888" stroke-width="1"></path></svg>
<div class="a" style="left:591px;top:51px;width:169px;height:470px;background:#535353"></div>
<div class="a" style="left:591px;top:51px;width:169px;height:21.500px;background:#424242"></div>
<div class="a" style="left:591px;top:51px;width:32.500px;height:21.500px;background:#535353"></div>
<div class="t fit" style="left: 596px; top: 58px; font-size: 8px; font-weight: bold; color: rgb(242, 242, 242); transform: scaleX(0.8141);">Layers</div>
<svg style="left:750px;top:59px" width="8" height="6"><path d="M0 .5H8M0 3H8M0 5.500H8" stroke="#bbb" stroke-width="1"></path></svg>
<div class="a" style="left:592px;top:78.500px;width:64px;height:15.500px;background:#444;border:1px solid #5c5c5c;border-radius:2px"></div>
<svg style="left:597px;top:81px" width="9" height="9"><circle cx="3.500" cy="3.500" r="2.600" fill="none" stroke="#e0e0e0" stroke-width="1.200"></circle><path d="M5.500 5.500L8 8" stroke="#e0e0e0" stroke-width="1.400"></path></svg>
<div class="t fit" style="left: 608px; top: 82.7px; font-size: 8px; color: rgb(224, 224, 224); transform: scaleX(0.9054);">Kind</div>
<svg style="left:647px;top:84px" width="6" height="4"><path d="M.5 .5L3 3L5.500 .5" fill="none" stroke="#ccc" stroke-width="1"></path></svg>
<svg style="left:0;top:0" width="768" height="140">
<rect x="664.500" y="82.500" width="8" height="7" fill="none" stroke="#e0e0e0" stroke-width="1"></rect><path d="M666 88l1.500 -2l1.500 1.500l1 -1l1 1.500z" fill="#e0e0e0"></path>
<circle cx="686" cy="86" r="3.600" fill="none" stroke="#e0e0e0" stroke-width="1"></circle><path d="M683.500 88.500A3.600 3.600 0 0 1 688.500 83.500Z" fill="#e0e0e0"></path>
<path d="M700.500 82.500H708.500V84.500H707.500V83.700H705.300V89.300H706.500V90H702.500V89.300H703.700V83.700H701.500V84.500H700.500Z" fill="#e0e0e0"></path>
<rect x="718.500" y="83.500" width="6" height="6" fill="none" stroke="#e0e0e0" stroke-width="1"></rect><rect x="717" y="82" width="2.500" height="2.500" fill="#e0e0e0"></rect><rect x="723.500" y="82" width="2.500" height="2.500" fill="#e0e0e0"></rect><rect x="717" y="88.500" width="2.500" height="2.500" fill="#e0e0e0"></rect><rect x="723.500" y="88.500" width="2.500" height="2.500" fill="#e0e0e0"></rect>
<path d="M737 82.500H741L743.500 85V90.500H737Z" fill="none" stroke="#e0e0e0" stroke-width="1"></path><rect x="739" y="86" width="3" height="3.500" fill="#e0e0e0"></rect>
<rect x="753" y="81" width="5" height="11.500" rx="2.500" fill="#3e3e3e" stroke="#333"></rect><circle cx="755.500" cy="82.200" r="3" fill="#e4e4e4"></circle>
</svg>
<div class="a" style="left:592px;top:99px;width:95px;height:16px;background:#444;border:1px solid #5c5c5c;border-radius:2px"></div>
<div class="t fit" style="left: 598px; top: 103px; font-size: 8px; color: rgb(224, 224, 224); transform: scaleX(0.8533);">Normal</div>
<svg style="left:678px;top:105px" width="6" height="4"><path d="M.5 .5L3 3L5.500 .5" fill="none" stroke="#ccc" stroke-width="1"></path></svg>
<div class="t fit" style="left: 691px; top: 103px; font-size: 8px; color: rgb(224, 224, 224); transform: scaleX(0.9201);">Opacity:</div>
<div class="a" style="left:721px;top:99px;width:37px;height:15px;background:#444;border:1px solid #5c5c5c;border-radius:2px"></div>
<div class="a" style="left:747px;top:99px;width:1px;height:15px;background:#666"></div>
<div class="t fit" style="left: 725px; top: 102.5px; font-size: 8px; color: rgb(224, 224, 224); transform: scaleX(0.855);">100%</div>
<svg style="left:750px;top:105px" width="6" height="4"><path d="M.5 .5L3 3L5.500 .5" fill="none" stroke="#ccc" stroke-width="1"></path></svg>
<div class="a" style="left:721px;top:120px;width:37px;height:15px;background:#444;border:1px solid #5c5c5c;border-radius:2px"></div>
<div class="a" style="left:747px;top:120px;width:1px;height:15px;background:#666"></div>
<div class="t fit" style="left: 725px; top: 123.5px; font-size: 8px; color: rgb(224, 224, 224); transform: scaleX(0.855);">100%</div>
<svg style="left:750px;top:126px" width="6" height="4"><path d="M.5 .5L3 3L5.500 .5" fill="none" stroke="#ccc" stroke-width="1"></path></svg>
<div class="t fit" style="left: 593px; top: 123.5px; font-size: 8px; color: rgb(224, 224, 224); transform: scaleX(0.8889);">Lock:</div>
<div class="t fit" style="left: 707px; top: 123.5px; font-size: 8px; color: rgb(224, 224, 224); transform: scaleX(0.803);">Fill:</div>
<svg style="left:0;top:0" width="768" height="140">
<rect x="617.500" y="123.500" width="7" height="7" fill="none" stroke="#999" stroke-width="1"></rect><rect x="618" y="124" width="3" height="3" fill="#999"></rect><rect x="621" y="127" width="3" height="3" fill="#999"></rect>
<g transform="translate(3.500 0)"><path d="M639 122.500L640.300 123.800L635.300 129.500L634 128.200Z" fill="#b4b4b4"></path><path d="M633.500 129L634.700 130.200Q633.500 132.300 630.500 131.800Q632.300 130.800 632.300 129.500Z" fill="#b4b4b4"></path></g>
<g transform="translate(3.500 0)"><path d="M650.500 122.500V131.500M646 127H655" stroke="#aaa" stroke-width="1"></path><path d="M649 124l1.500 -2l1.500 2zM649 130l1.500 2l1.500 -2zM647.500 125.500l-2 1.500l2 1.500zM653.500 125.500l2 1.500l-2 1.500z" fill="#aaa"></path></g>
<g transform="translate(5 0)"><path d="M662.500 122V130.500H671M660 124.500H668.500V132.500" fill="none" stroke="#d0d0d0" stroke-width="1"></path></g>
<rect x="683" y="126.500" width="7" height="5.500" fill="#e0e0e0"></rect><path d="M684.500 126.500V125a2 2 0 0 1 4 0V126.500" fill="none" stroke="#e0e0e0" stroke-width="1.200"></path>
</svg>
<div class="a" style="left:611px;top:139px;width:138px;height:346px;background:#444"></div>
<div class="a" style="left:749px;top:139px;width:11px;height:346px;background:#4a4a4a"></div>
<div class="a" style="left:611px;top:139px;width:138px;height:28px;background:#6b6b6b"></div>
<div class="a" style="left:591px;top:167px;width:20px;height:1px;background:#484848"></div>
<div class="a" style="left:611px;top:168px;width:138px;height:29px;background:#6b6b6b"></div>
<div class="a" style="left:591px;top:197px;width:20px;height:1px;background:#484848"></div>
<div class="a" style="left:611px;top:199px;width:138px;height:17px;background:#6b6b6b"></div>
<div class="a" style="left:591px;top:216px;width:20px;height:1px;background:#484848"></div>
<div class="a" style="left:611px;top:217px;width:138px;height:29px;background:#4e4e4e"></div>
<div class="a" style="left:591px;top:246px;width:20px;height:1px;background:#484848"></div>
<div class="a" style="left:611px;top:247px;width:138px;height:57px;background:#4e4e4e"></div>
<div class="a" style="left:591px;top:304px;width:20px;height:1px;background:#484848"></div>
<div class="a" style="left:611px;top:305px;width:138px;height:29px;background:#4e4e4e"></div>
<div class="a" style="left:591px;top:334px;width:20px;height:1px;background:#484848"></div>
<div class="a" style="left:611px;top:335px;width:138px;height:29px;background:#4e4e4e"></div>
<div class="a" style="left:591px;top:364px;width:20px;height:1px;background:#484848"></div>
<div class="a" style="left:611px;top:365px;width:138px;height:29px;background:#4e4e4e"></div>
<div class="a" style="left:591px;top:394px;width:20px;height:1px;background:#484848"></div>
<div class="a" style="left:611px;top:395px;width:138px;height:29px;background:#4e4e4e"></div>
<div class="a" style="left:591px;top:424px;width:20px;height:1px;background:#484848"></div>
<div class="a" style="left:611px;top:425px;width:138px;height:29px;background:#6b6b6b"></div>
<div class="a" style="left:591px;top:454px;width:20px;height:1px;background:#484848"></div>
<div class="a" style="left:611px;top:455px;width:138px;height:30px;background:#4e4e4e"></div>
<div class="a" style="left:591px;top:485px;width:20px;height:1px;background:#484848"></div>
<div class="a" style="left:742px;top:247px;width:8px;height:30px;background:#5e5e5e"></div>
<svg style="left:0;top:0" width="768" height="537"><g transform="translate(600.5 154) scale(1.0)"><path d="M-5 0Q0 -5 5 0Q0 5 -5 0Z" fill="#e8e8e8"></path><circle cx="0" cy="0" r="2" fill="#4a4a4a"></circle><circle cx="-.7" cy="-.8" r=".55" fill="#e8e8e8" opacity=".8"></circle></g><g transform="translate(600.5 184) scale(1.0)"><path d="M-5 0Q0 -5 5 0Q0 5 -5 0Z" fill="#e8e8e8"></path><circle cx="0" cy="0" r="2" fill="#4a4a4a"></circle><circle cx="-.7" cy="-.8" r=".55" fill="#e8e8e8" opacity=".8"></circle></g><g transform="translate(600.5 208.3) scale(1.0)"><path d="M-5 0Q0 -5 5 0Q0 5 -5 0Z" fill="#e8e8e8"></path><circle cx="0" cy="0" r="2" fill="#4a4a4a"></circle><circle cx="-.7" cy="-.8" r=".55" fill="#e8e8e8" opacity=".8"></circle></g><g transform="translate(600.5 232.3) scale(1.0)"><path d="M-5 0Q0 -5 5 0Q0 5 -5 0Z" fill="#e8e8e8"></path><circle cx="0" cy="0" r="2" fill="#4a4a4a"></circle><circle cx="-.7" cy="-.8" r=".55" fill="#e8e8e8" opacity=".8"></circle></g><g transform="translate(600.5 262.5) scale(1.0)"><path d="M-5 0Q0 -5 5 0Q0 5 -5 0Z" fill="#e8e8e8"></path><circle cx="0" cy="0" r="2" fill="#4a4a4a"></circle><circle cx="-.7" cy="-.8" r=".55" fill="#e8e8e8" opacity=".8"></circle></g><g transform="translate(600.5 320.7) scale(1.0)"><path d="M-5 0Q0 -5 5 0Q0 5 -5 0Z" fill="#e8e8e8"></path><circle cx="0" cy="0" r="2" fill="#4a4a4a"></circle><circle cx="-.7" cy="-.8" r=".55" fill="#e8e8e8" opacity=".8"></circle></g><g transform="translate(600.5 350.7) scale(1.0)"><path d="M-5 0Q0 -5 5 0Q0 5 -5 0Z" fill="#e8e8e8"></path><circle cx="0" cy="0" r="2" fill="#4a4a4a"></circle><circle cx="-.7" cy="-.8" r=".55" fill="#e8e8e8" opacity=".8"></circle></g><g transform="translate(600.5 380.7) scale(1.0)"><path d="M-5 0Q0 -5 5 0Q0 5 -5 0Z" fill="#e8e8e8"></path><circle cx="0" cy="0" r="2" fill="#4a4a4a"></circle><circle cx="-.7" cy="-.8" r=".55" fill="#e8e8e8" opacity=".8"></circle></g><g transform="translate(600.5 410.7) scale(1.0)"><path d="M-5 0Q0 -5 5 0Q0 5 -5 0Z" fill="#e8e8e8"></path><circle cx="0" cy="0" r="2" fill="#4a4a4a"></circle><circle cx="-.7" cy="-.8" r=".55" fill="#e8e8e8" opacity=".8"></circle></g><g transform="translate(600.5 440.7) scale(1.0)"><path d="M-5 0Q0 -5 5 0Q0 5 -5 0Z" fill="#e8e8e8"></path><circle cx="0" cy="0" r="2" fill="#4a4a4a"></circle><circle cx="-.7" cy="-.8" r=".55" fill="#e8e8e8" opacity=".8"></circle></g><g transform="translate(600.5 470.7) scale(1.0)"><path d="M-5 0Q0 -5 5 0Q0 5 -5 0Z" fill="#e8e8e8"></path><circle cx="0" cy="0" r="2" fill="#4a4a4a"></circle><circle cx="-.7" cy="-.8" r=".55" fill="#e8e8e8" opacity=".8"></circle></g><g transform="translate(642 283.5) scale(0.8)"><path d="M-5 0Q0 -5 5 0Q0 5 -5 0Z" fill="#e8e8e8"></path><circle cx="0" cy="0" r="2" fill="#4a4a4a"></circle><circle cx="-.7" cy="-.8" r=".55" fill="#e8e8e8" opacity=".8"></circle></g><g transform="translate(654 296.5) scale(0.8)"><path d="M-5 0Q0 -5 5 0Q0 5 -5 0Z" fill="#e8e8e8"></path><circle cx="0" cy="0" r="2" fill="#4a4a4a"></circle><circle cx="-.7" cy="-.8" r=".55" fill="#e8e8e8" opacity=".8"></circle></g><g transform="translate(626.5 154)"><path d="M-4.500 -5.500H4.500V-3H3.800V-4.500H.7V4.600H2.200V5.500H-2.200V4.600H-.7V-4.500H-3.800V-3H-4.500Z" fill="#f0f0f0"></path></g><g transform="translate(626.5 184)"><path d="M-4.500 -5.500H4.500V-3H3.800V-4.500H.7V4.600H2.200V5.500H-2.200V4.600H-.7V-4.500H-3.800V-3H-4.500Z" fill="#f0f0f0"></path></g><g transform="translate(638 232.5)"><path d="M-4.500 -5.500H4.500V-3H3.800V-4.500H.7V4.600H2.200V5.500H-2.200V4.600H-.7V-4.500H-3.800V-3H-4.500Z" fill="#f0f0f0"></path></g><path d="M615 206L618 209L621 206" fill="none" stroke="#ddd" stroke-width="1"></path><path d="M623 204.500H627L628 205.500H633V212H623Z" fill="#e8e8e8"></path><path d="M623 206.800H633" stroke="#666" stroke-width=".7"></path><rect x="730.500" y="228.500" width="5" height="5" fill="none" stroke="#ddd" stroke-width="1"></rect><rect x="733.500" y="231.500" width="5" height="5" fill="#4e4e4e" stroke="#ddd" stroke-width="1"></rect><rect x="719" y="261" width="7" height="5.500" fill="#e8e8e8"></rect><path d="M720.500 261V259.500a2 2 0 0 1 4 0V261" fill="none" stroke="#e8e8e8" stroke-width="1.200"></path><path d="M743.500 263.500L746 261L748.500 263.500" fill="none" stroke="#ddd" stroke-width="1"></path><rect x="620.500" y="405.500" width="11" height="9" fill="none" stroke="#ddd" stroke-width="1"></rect><path d="M620.500 408.500H631.500M620.500 411.500H631.500M624.200 405.500V414.500M627.800 405.500V414.500" stroke="#ddd" stroke-width=".8"></path><rect x="640.500" y="405.500" width="4" height="5" rx="2" fill="none" stroke="#ddd" stroke-width="1"></rect><rect x="640.500" y="409.500" width="4" height="5" rx="2" fill="none" stroke="#ddd" stroke-width="1"></rect></svg>
<div class="t" style="left:731px;top:256px;font-family:'Liberation Serif',serif;font-style:italic;font-size:11px;color:#eee;transform:scaleX(.9)">fx</div>
<div class="t fit" style="left: 644px; top: 150.2px; font-size: 8px; color: rgb(236, 236, 236); transform: scaleX(0.8991);">Kim Yoo Jung</div>
<div class="t fit" style="left: 644px; top: 180.5px; font-size: 8px; color: rgb(236, 236, 236); transform: scaleX(0.892);">Photoshop First Cover</div>
<div class="t fit" style="left: 642px; top: 204.2px; font-size: 8px; color: rgb(236, 236, 236); transform: scaleX(0.8995);">Group 1</div>
<div class="t fit" style="left: 656px; top: 228.5px; font-size: 8px; color: rgb(236, 236, 236); transform: scaleX(0.8887);">WORK&nbsp; H...AM&nbsp; BIG</div>
<div class="t fit" style="left: 656px; top: 258.7px; font-size: 8px; color: rgb(236, 236, 236); transform: scaleX(0.8899);">Rectangle 2</div>
<div class="t fit" style="left: 651px; top: 279.2px; font-size: 8px; color: rgb(236, 236, 236); transform: scaleX(0.8638);">Effects</div>
<div class="t fit" style="left: 663px; top: 293px; font-size: 8px; color: rgb(236, 236, 236); transform: scaleX(0.9081);">Stroke</div>
<div class="t fit" style="left: 656px; top: 317px; font-size: 8px; color: rgb(236, 236, 236); transform: scaleX(0.8914);">Ellipse 1 copy</div>
<div class="t fit" style="left: 656px; top: 347px; font-size: 8px; color: rgb(236, 236, 236); transform: scaleX(0.8595);">Ellipse 1</div>
<div class="t fit" style="left: 656px; top: 377px; font-size: 8px; color: rgb(236, 236, 236); transform: scaleX(0.8899);">Rectangle 1</div>
<div class="t fit" style="left: 678px; top: 407px; font-size: 8px; color: rgb(236, 236, 236); transform: scaleX(0.8845);">Color Lookup 1</div>
<div class="t fit" style="left: 644px; top: 437px; font-size: 8px; color: rgb(236, 236, 236); transform: scaleX(0.9081);">download (5)</div>
<div class="t fit" style="left: 644px; top: 467px; font-size: 8px; color: rgb(236, 236, 236); transform: scaleX(0.8618);">Layer 1</div>
<div class="a" style="left:626px;top:250px;width:23px;height:23px;background:#fff;border:1px solid #3a3a3a;overflow:hidden"></div>
<div class="a" style="left:638px;top:262px;width:12px;height:12px;background:#4a4a4a"></div>
<svg style="left:640px;top:264px" width="9" height="9"><rect x="1.500" y="1.500" width="6" height="6" fill="none" stroke="#eee" stroke-width="1"></rect><rect x="0" y="0" width="2.500" height="2.500" fill="#eee"></rect><rect x="6.500" y="0" width="2.500" height="2.500" fill="#eee"></rect><rect x="0" y="6.500" width="2.500" height="2.500" fill="#eee"></rect><rect x="6.500" y="6.500" width="2.500" height="2.500" fill="#eee"></rect></svg>
<div class="a" style="left:626px;top:308px;width:23px;height:23px;background-color:#fff;background-image:linear-gradient(45deg,#ccc 25%,transparent 25%,transparent 75%,#ccc 75%),linear-gradient(45deg,#ccc 25%,transparent 25%,transparent 75%,#ccc 75%);background-size:4px 4px;background-position:0 0,2px 2px;border:1px solid #3a3a3a;overflow:hidden"><div class="a" style="left:17px;top:-6px;width:14px;height:14px;border-radius:50%;background:#c46c9c"></div></div>
<div class="a" style="left:638px;top:320px;width:12px;height:12px;background:#4a4a4a"></div>
<svg style="left:640px;top:322px" width="9" height="9"><rect x="1.500" y="1.500" width="6" height="6" fill="none" stroke="#eee" stroke-width="1"></rect><rect x="0" y="0" width="2.500" height="2.500" fill="#eee"></rect><rect x="6.500" y="0" width="2.500" height="2.500" fill="#eee"></rect><rect x="0" y="6.500" width="2.500" height="2.500" fill="#eee"></rect><rect x="6.500" y="6.500" width="2.500" height="2.500" fill="#eee"></rect></svg>
<div class="a" style="left:626px;top:338px;width:23px;height:23px;background-color:#fff;background-image:linear-gradient(45deg,#ccc 25%,transparent 25%,transparent 75%,#ccc 75%),linear-gradient(45deg,#ccc 25%,transparent 25%,transparent 75%,#ccc 75%);background-size:4px 4px;background-position:0 0,2px 2px;border:1px solid #3a3a3a;overflow:hidden"><div class="a" style="left:-6px;top:14px;width:13px;height:13px;border-radius:50%;background:#c46c9c"></div></div>
<div class="a" style="left:638px;top:350px;width:12px;height:12px;background:#4a4a4a"></div>
<svg style="left:640px;top:352px" width="9" height="9"><rect x="1.500" y="1.500" width="6" height="6" fill="none" stroke="#eee" stroke-width="1"></rect><rect x="0" y="0" width="2.500" height="2.500" fill="#eee"></rect><rect x="6.500" y="0" width="2.500" height="2.500" fill="#eee"></rect><rect x="0" y="6.500" width="2.500" height="2.500" fill="#eee"></rect><rect x="6.500" y="6.500" width="2.500" height="2.500" fill="#eee"></rect></svg>
<div class="a" style="left:626px;top:369px;width:23px;height:23px;background-color:#fff;background-image:linear-gradient(45deg,#ccc 25%,transparent 25%,transparent 75%,#ccc 75%),linear-gradient(45deg,#ccc 25%,transparent 25%,transparent 75%,#ccc 75%);background-size:4px 4px;background-position:0 0,2px 2px;border:1px solid #3a3a3a;overflow:hidden"><div class="a" style="left:10px;top:0;width:13px;height:23px;background:#fff"></div></div>
<div class="a" style="left:638px;top:381px;width:12px;height:12px;background:#4a4a4a"></div>
<svg style="left:640px;top:383px" width="9" height="9"><rect x="1.500" y="1.500" width="6" height="6" fill="none" stroke="#eee" stroke-width="1"></rect><rect x="0" y="0" width="2.500" height="2.500" fill="#eee"></rect><rect x="6.500" y="0" width="2.500" height="2.500" fill="#eee"></rect><rect x="0" y="6.500" width="2.500" height="2.500" fill="#eee"></rect><rect x="6.500" y="6.500" width="2.500" height="2.500" fill="#eee"></rect></svg>
<div class="a" style="left:649px;top:398px;width:23px;height:23px;background:#fff;border:1px solid #3a3a3a;overflow:hidden"></div>
<div class="a" style="left:614px;top:429px;width:23px;height:23px;background:#f2a6cf;border:1px solid #3a3a3a;overflow:hidden"><div class="a" style="left:4.500px;top:1px;width:11.300px;height:8.500px;border-radius:50%;background:#25202a"></div><div class="a" style="left:14px;top:3.500px;width:4px;height:4.500px;border-radius:50%;background:#2a242c"></div><div class="a" style="left:5.800px;top:6px;width:7.800px;height:9.500px;border-radius:45% 45% 50% 50%;background:#f0d3cd"></div><div class="a" style="left:5px;top:4px;width:5px;height:5px;border-radius:50%;background:#2a242c;opacity:.8"></div><div class="a" style="left:6px;top:14.500px;width:11px;height:9px;border-radius:50% 60% 0 0;background:#f5e2db"></div><div class="a" style="left:9.500px;top:12.800px;width:2px;height:1.300px;border-radius:50%;background:#d8505a"></div></div>
<div class="a" style="left:614px;top:459px;width:23px;height:23px;background:#fff;border:1px solid #3a3a3a;overflow:hidden"></div>
<div class="a" style="left:587px;top:516px;width:177px;height:1px;background:#3c3c3c"></div>
<div class="a" style="left:587px;top:517px;width:177px;height:17px;background:#535353"></div>
<svg style="left:0;top:0" width="768" height="537"><g fill="none" stroke="#c4c4c4" stroke-width="1.100">
<rect x="613.500" y="521.500" width="5" height="4.500" rx="2.200"></rect><rect x="618" y="521.500" width="5" height="4.500" rx="2.200"></rect>
<path d="M635.500 521L633.500 528.500M637 524.500L641.500 528.500M641.500 524.500L637 528.500"></path>
<rect x="653.500" y="521.500" width="9" height="5.500" fill="#8a8a8a"></rect>
<path d="M674 524a4.500 4.500 0 0 0 9 0z" fill="#c4c4c4"></path><path d="M681 529.500h2.500l-1.250 1.500z" fill="#ddd" stroke="none"></path>
<rect x="693.500" y="522" width="9" height="5" fill="#d6d6d6" stroke="#d6d6d6"></rect>
<rect x="713.500" y="520.500" width="8" height="6.500"></rect><path d="M717.500 523V526"></path>
<path d="M733.500 523.500V528.500H739.500V523.500M735.500 525V527.500M737.500 525V527.500" stroke="#7c7c7c"></path></g></svg>
<div class="a" style="left:612px;top:534px;width:35px;height:3px;background:#79726e"></div>
<div class="a" style="left:587px;top:46.300px;width:177.300px;height:477.900px;border:4.300px solid #e60000;border-radius:2px"></div>
</body></html>
